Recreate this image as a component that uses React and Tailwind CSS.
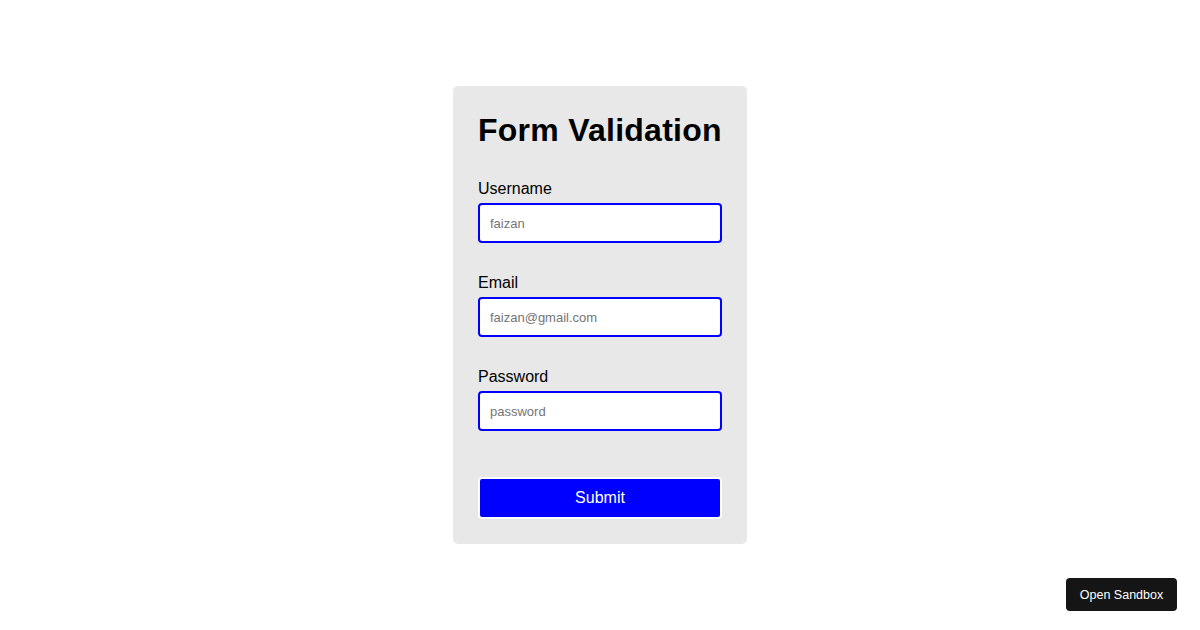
import { useState } from "react";

function App() {
  const [input, setInput] = useState({
    username: "",
    email: "",
    password: "",
  });

  const handleChange = (e) => {
    setInput({ ...input, [e.target.name]: e.target.value });
  };

  const handleSubmit = (e) => {
    e.preventDefault();
  };

  const fields = [
    { name: "username", label: "Username", type: "text", placeholder: "faizan" },
    { name: "email", label: "Email", type: "email", placeholder: "faizan@gmail.com" },
    { name: "password", label: "Password", type: "password", placeholder: "password" },
  ];

  return (
    <div className="min-h-screen bg-white flex items-center justify-center font-['Liberation_Sans',Arial,sans-serif] text-black">
      <form
        onSubmit={handleSubmit}
        className="w-[294px] bg-[#e8e8e8] rounded-[5px] p-[25px] flex flex-col"
      >
        <h1 className="text-[32px] leading-[38px] font-bold tracking-[0.25px] mb-[29px]">
          Form Validation
        </h1>

        {fields.map((f) => (
          <div key={f.name} className="flex flex-col mb-[29px]">
            <label htmlFor={f.name} className="text-[16px] leading-[21px] mb-[4px]">
              {f.label}
            </label>
            <input
              id={f.name}
              name={f.name}
              type={f.type}
              placeholder={f.placeholder}
              value={input[f.name]}
              onChange={handleChange}
              className="w-full h-[40px] px-[10px] text-[13px] bg-white border-2 border-[#0000ff] rounded-[4px] outline-none placeholder:text-[#757575]"
            />
          </div>
        ))}

        <button
          type="submit"
          className="mt-[17px] h-[42px] w-full bg-[#0000ff] text-white text-[16px] border-2 border-white rounded-[4px]"
        >
          Submit
        </button>
      </form>

      <button
        type="button"
        className="fixed right-[23px] bottom-[19px] h-[33px] w-[111px] flex items-center justify-center pt-[1px] bg-[#151515] text-white text-[12.5px] rounded-[4px]"
      >
        Open Sandbox
      </button>
    </div>
  );
}

export default App;
